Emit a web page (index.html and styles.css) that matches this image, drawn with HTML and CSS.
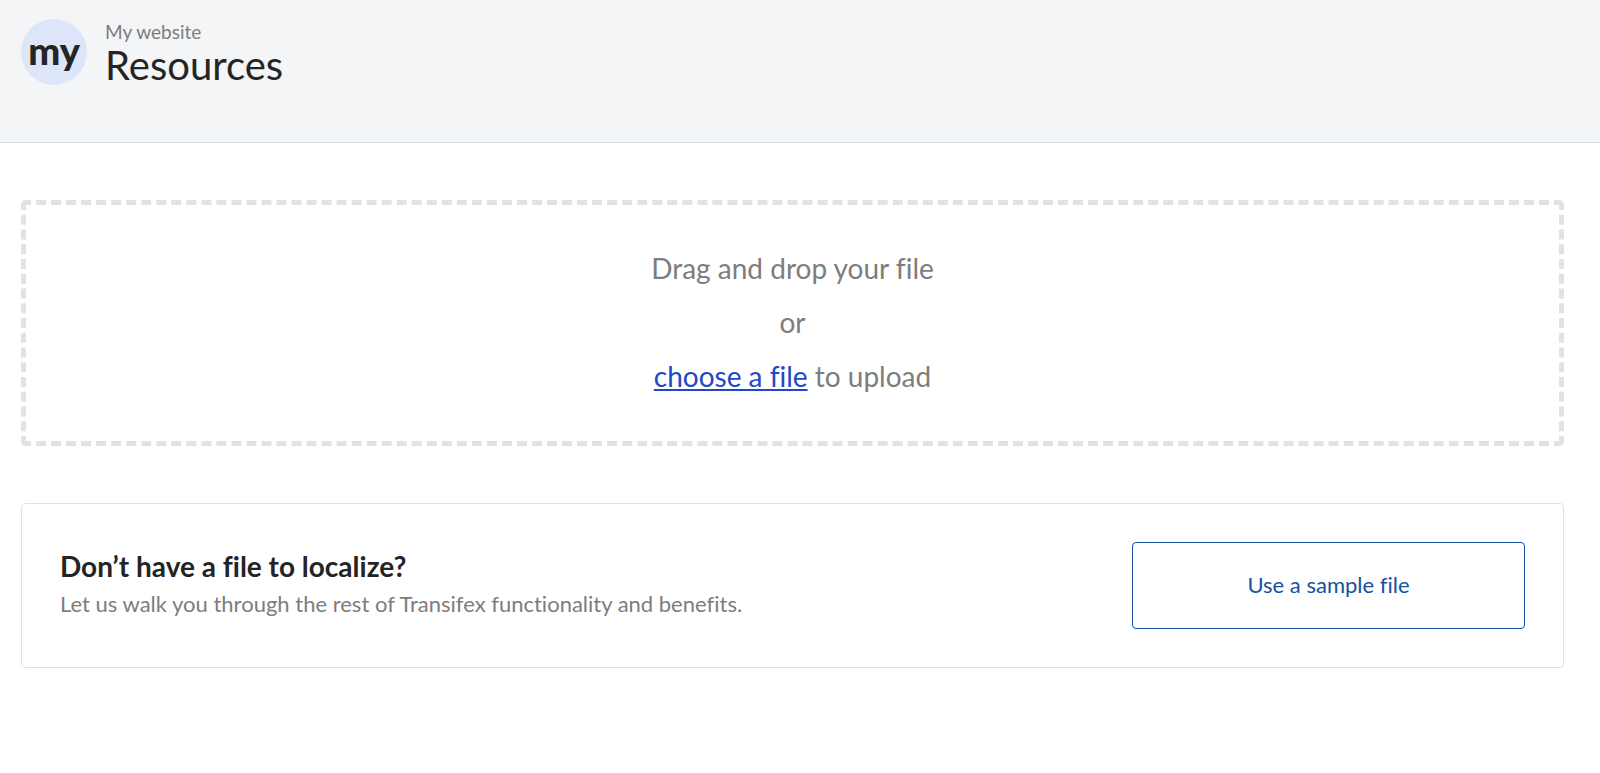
FILE: index.html
```html
<!DOCTYPE html>
<html lang="en">
<head>
  <meta charset="UTF-8">
  <meta name="viewport" content="width=device-width, initial-scale=1.0">
  <title>Resources - My website</title>
  <link rel="stylesheet" href="styles.css">
</head>
<body>
  <header class="page-header">
    <div class="avatar">my</div>
    <div class="page-title">
      <p class="project-name">My website</p>
      <h1>Resources</h1>
    </div>
  </header>

  <main class="content">
    <section class="dropzone">
      <p>Drag and drop your file</p>
      <p>or</p>
      <p><a href="#" class="choose-link">choose a file</a> to upload</p>
    </section>

    <section class="sample-card">
      <div class="sample-text">
        <h2>Don’t have a file to localize?</h2>
        <p>Let us walk you through the rest of Transifex functionality and benefits.</p>
      </div>
      <button type="button" class="btn">Use a sample file</button>
    </section>
  </main>
</body>
</html>
```
FILE: styles.css
```css
:root {
  --text: #242424;
  --muted: #7d7d7d;
  --border: #e1e2e7;
  --header-bg: #f4f5f7;
  --avatar-bg: #dde5f9;
  --link: #2148c7;
  --primary: #1552a0;
}
* {
  box-sizing: border-box;
}
body {
  font-family: Lato, "Liberation Sans", sans-serif;
  font-variant-ligatures: none;
  background: #fff;
  color: var(--text);
  margin: 0;
}
h1, h2, p {
  margin: 0;
}

/* header */
.page-header {
  display: flex;
  align-items: flex-start;
  gap: 18px;
  padding: 19px 21px 57px;
  background: var(--header-bg);
  border-bottom: 1px solid #d9dce1;
}
.avatar {
  display: flex;
  align-items: center;
  justify-content: center;
  width: 66px;
  height: 66px;
  padding-bottom: 4px;
  border-radius: 50%;
  background: var(--avatar-bg);
  font-size: 38px;
  font-weight: 900;
}
.project-name {
  font-size: 19px;
  line-height: 26px;
  color: var(--muted);
}
h1 {
  font-size: 40px;
  font-weight: 400;
  line-height: 40px;
}

/* content */
.content {
  display: flex;
  flex-direction: column;
  gap: 57px;
  padding: 57px 36px 57px 21px;
}
.dropzone {
  display: flex;
  flex-direction: column;
  gap: 20px;
  padding: 46px 20px 48px;
  border: 5px dashed var(--border);
  border-radius: 5px;
  text-align: center;
  font-size: 28px;
  line-height: 34px;
  color: var(--muted);
}
.choose-link {
  color: var(--link);
  text-decoration: underline;
  text-decoration-thickness: 2px;
  text-underline-offset: 2px;
}
.sample-card {
  display: flex;
  align-items: center;
  justify-content: space-between;
  gap: 40px;
  padding: 38px;
  border: 1px solid var(--border);
  border-radius: 4px;
}
.sample-text {
  padding-bottom: 2px;
}
h2 {
  font-size: 28px;
  font-weight: 700;
  line-height: 38px;
}
.sample-text p {
  font-size: 22px;
  line-height: 38px;
  color: var(--muted);
}
.btn {
  flex: 0 1 393px;
  height: 87px;
  padding: 0 20px 2px;
  background: #fff;
  border: 1px solid var(--primary);
  border-radius: 4px;
  color: var(--primary);
  font-family: inherit;
  font-size: 22px;
  font-variant-ligatures: none;
  cursor: pointer;
}
```
